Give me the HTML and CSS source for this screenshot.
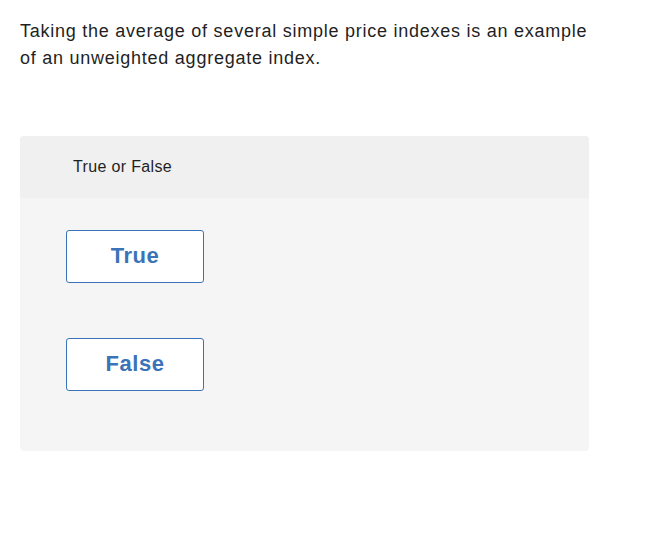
FILE: index.html
```html
<!DOCTYPE html>
<html>
<head>
<meta charset="utf-8">
<link rel="stylesheet" href="styles.css">
</head>
<body>
<div class="page">
  <p class="prompt">Taking the average of several simple price indexes is an example of an unweighted aggregate index.</p>
  <div class="card">
    <div class="card-head">True or False</div>
    <div class="card-body">
      <button class="choice">True</button>
      <button class="choice">False</button>
    </div>
  </div>
</div>
</body>
</html>
```
FILE: styles.css
```css
html, body {
  margin: 0;
  padding: 0;
  background: #ffffff;
}
.page {
  padding: 18px 20px 0 20px;
  width: 575px;
  font-family: "Liberation Sans", Arial, sans-serif;
  color: #1f1f1f;
}
.prompt {
  margin: 0;
  font-size: 18px;
  line-height: 27px;
  letter-spacing: 0.75px;
}
.card {
  margin-top: 64px;
  width: 569px;
  border-radius: 4px;
  overflow: hidden;
  background: #f5f5f5;
}
.card-head {
  height: 62px;
  box-sizing: border-box;
  padding: 21px 0 0 53px;
  background: #f0f0f0;
  font-size: 16px;
  line-height: 20px;
  letter-spacing: 0.35px;
}
.card-body {
  display: flex;
  flex-direction: column;
  align-items: flex-start;
  gap: 55px;
  padding: 32px 0 60px 46px;
}
.choice {
  width: 138px;
  height: 53px;
  box-sizing: border-box;
  background: #ffffff;
  border: 1px solid #3b73b9;
  border-radius: 3px;
  color: #3b73b9;
  font-family: "Liberation Sans", Arial, sans-serif;
  font-weight: 700;
  font-size: 22px;
  letter-spacing: 0.5px;
  padding: 0 0 1px 0;
}
```
